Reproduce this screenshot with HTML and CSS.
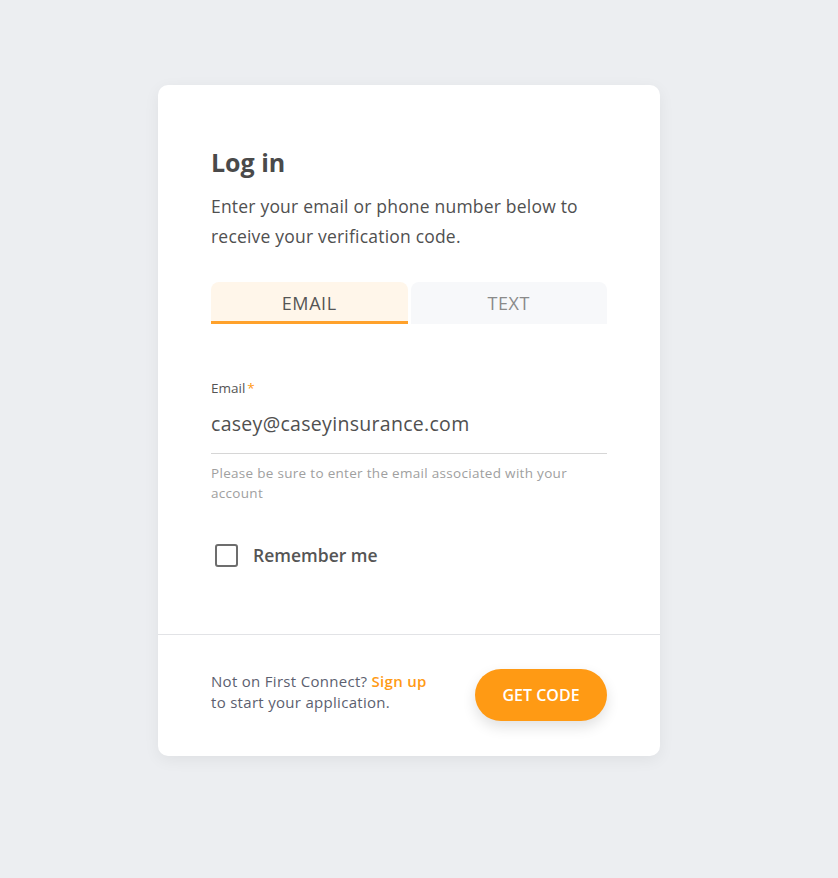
FILE: index.html
```html
<!DOCTYPE html>
<html lang="en">

<head>
    <meta charset="UTF-8" />
    <meta name="viewport" content="width=device-width, initial-scale=1.0" />
    <title>Log in</title>
    <link rel="stylesheet" href="styles.css">
</head>

<body>
    <div class="login-card">
        <div class="login-body">
            <h1 class="login-title">Log in</h1>
            <p class="login-desc">Enter your email or phone number below to receive your verification code.</p>

            <div class="tabs">
                <button class="tab active">EMAIL</button>
                <button class="tab">TEXT</button>
            </div>

            <div class="field">
                <label class="field-label">Email<span class="req">*</span></label>
                <div class="field-input">casey@caseyinsurance.com</div>
                <p class="field-help">Please be sure to enter the email associated with your account</p>
            </div>

            <label class="remember">
                <span class="checkbox"></span>
                <span>Remember me</span>
            </label>
        </div>

        <div class="login-footer">
            <p class="signup-text">Not on First Connect? <a href="#" class="signup-link">Sign up</a><br>to start your application.</p>
            <button class="get-code-btn">GET CODE</button>
        </div>
    </div>
</body>

</html>
```

FILE: styles.css
```css
* {
    box-sizing: border-box;
    margin: 0;
    padding: 0;
}

body {
    font-family: 'Open Sans', 'Noto Sans', sans-serif;
    background: #eceef1;
    min-height: 100vh;
    padding-top: 85px;
    color: #4a4a4a;
}

.login-card {
    width: 502px;
    margin-left: 158px;
    background: white;
    border-radius: 10px;
    box-shadow: 0 4px 16px rgba(0, 0, 0, 0.06);
}

.login-body {
    padding: 60px 53px 67px;
}

.login-title {
    font-size: 25px;
    font-weight: 700;
    line-height: 34px;
    color: #4a4a4a;
    margin-bottom: 12px;
}

.login-desc {
    font-size: 17.5px;
    letter-spacing: 0.2px;
    line-height: 30px;
    color: #505050;
    margin-bottom: 31px;
}

.tabs {
    display: grid;
    grid-template-columns: 1fr 1fr;
    gap: 3px;
    margin-bottom: 55px;
}

.tab {
    height: 42px;
    border: none;
    border-radius: 8px 8px 0 0;
    background: #f7f8fa;
    font-family: inherit;
    font-size: 18px;
    letter-spacing: 0.6px;
    color: #8a8a8a;
    border-bottom: 3px solid transparent;
    padding-top: 2px;
}

.tab.active {
    background: #fff6ea;
    color: #555;
    border-bottom-color: #ffa12a;
}

.field-label {
    display: block;
    font-size: 13.5px;
    line-height: 18px;
    color: #555;
}

.req {
    color: #ff9a14;
    margin-left: 2px;
}

.field-input {
    font-size: 19.5px;
    letter-spacing: 0.3px;
    line-height: 26px;
    color: #505050;
    padding: 14px 0 16px;
    border-bottom: 1px solid #d6d6d6;
}

.field-help {
    font-size: 13.5px;
    letter-spacing: 0.3px;
    line-height: 20px;
    color: #a0a0a0;
    margin-top: 9px;
}

.remember {
    display: flex;
    align-items: center;
    gap: 15px;
    margin-top: 40px;
    margin-left: 4px;
    font-size: 17.5px;
    font-weight: 600;
    color: #555;
}

.checkbox {
    width: 23px;
    height: 23px;
    border: 2px solid #6d6d6d;
    border-radius: 3px;
}

.login-footer {
    border-top: 1px solid #e2e3e6;
    padding: 34px 53px 35px;
    display: flex;
    justify-content: space-between;
    align-items: center;
}

.signup-text {
    font-size: 15px;
    letter-spacing: 0.3px;
    line-height: 21px;
    color: #5c5f70;
    margin-bottom: 7px;
}

.signup-link {
    color: #ff9a14;
    text-decoration: none;
    font-weight: 600;
}

.get-code-btn {
    width: 132px;
    height: 52px;
    border: none;
    border-radius: 26px;
    background: #ff9a14;
    color: white;
    font-family: inherit;
    font-size: 16px;
    font-weight: 600;
    box-shadow: 0 6px 14px rgba(0, 0, 0, 0.12);
    cursor: pointer;
}
```
